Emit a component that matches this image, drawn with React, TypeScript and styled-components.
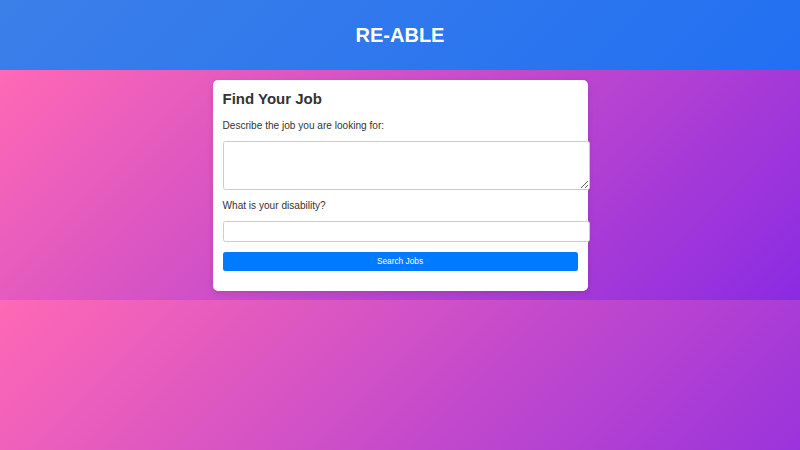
import React, { useState } from 'react';
import styled, { createGlobalStyle } from 'styled-components';

const GlobalStyle = createGlobalStyle`
  body {
    margin: 0;
    font-family: "Liberation Sans", Arial, sans-serif;
    background: linear-gradient(135deg, #ff69b4, #8a2be2);
    color: #333;
  }
`;

const App = (): JSX.Element => {
  const [job, setJob] = useState<string>('');
  const [disability, setDisability] = useState<string>('');

  return (
    <>
      <GlobalStyle />
      <Header>
        <Logo>RE-ABLE</Logo>
      </Header>
      <Main>
        <Card>
          <CardTitle>Find Your Job</CardTitle>
          <Label htmlFor="job">Describe the job you are looking for:</Label>
          <TextArea
            id="job"
            value={job}
            onChange={(e) => setJob(e.target.value)}
          />
          <Label htmlFor="disability">What is your disability?</Label>
          <Input
            id="disability"
            value={disability}
            onChange={(e) => setDisability(e.target.value)}
          />
          <SearchButton>Search Jobs</SearchButton>
        </Card>
      </Main>
    </>
  );
};

export default App;

const Header = styled.header`
  height: 70px;
  display: flex;
  align-items: center;
  justify-content: center;
  background: linear-gradient(135deg, #3b7fe8, #2270f2);
`;

const Logo = styled.h1`
  margin: 0;
  color: white;
  font-size: 20px;
  font-weight: bold;
`;

const Main = styled.main`
  height: 230px;
  box-sizing: border-box;
  padding-top: 10px;
  background: linear-gradient(135deg, #ff69b4, #8a2be2);
`;

const Card = styled.div`
  width: 375px;
  box-sizing: border-box;
  margin: 0 auto;
  padding: 10px;
  background-color: white;
  border-radius: 5px;
  box-shadow: 0 2px 6px rgba(0, 0, 0, 0.12);
`;

const CardTitle = styled.h2`
  margin: 0 0 13px;
  font-size: 15px;
  font-weight: bold;
  color: #333;
`;

const Label = styled.label`
  display: block;
  font-size: 10.1px;
  color: #333;
  margin-bottom: 10px;
`;

const TextArea = styled.textarea`
  display: block;
  width: 100%;
  height: 36.5px;
  padding: 5px;
  margin: 0 0 10px;
  border: 1px solid #ccc;
  border-radius: 2.5px;
  font-family: inherit;
  font-size: 8.3px;
`;

const Input = styled.input`
  display: block;
  width: 100%;
  height: 9px;
  padding: 5px;
  margin: 0 0 10px;
  border: 1px solid #ccc;
  border-radius: 2.5px;
  font-family: inherit;
  font-size: 8.3px;
`;

const SearchButton = styled.button`
  display: block;
  width: 100%;
  height: 19.5px;
  margin: 0 0 10px;
  border: none;
  border-radius: 2.5px;
  background-color: #007bff;
  color: white;
  font-family: inherit;
  font-size: 8.3px;
  cursor: pointer;
`;
